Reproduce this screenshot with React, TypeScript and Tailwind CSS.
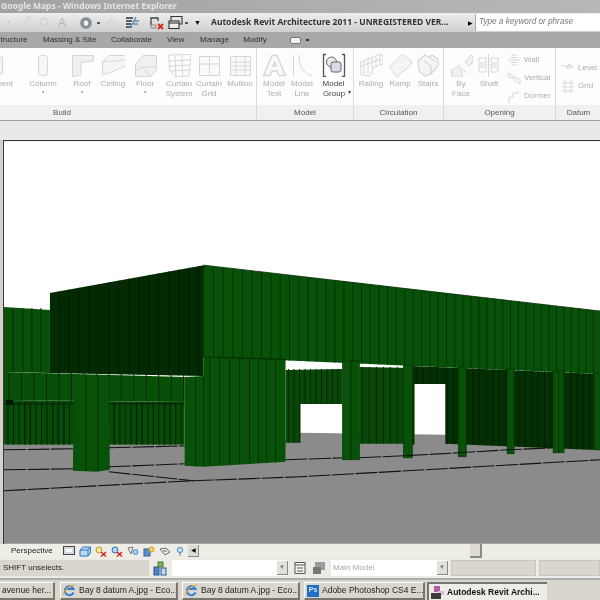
import type { ReactNode } from 'react';

const FONT = "font-['Liberation_Sans',sans-serif]";

// stripes on the long facade get tighter going away from the viewer
const longFaceLines = (() => {
  const xs: number[] = [];
  let x = 203;
  while (x < 600) {
    xs.push(x);
    x += 9.8 - ((x - 203) / 397) * 2.6;
  }
  return xs;
})();
const range = (from: number, to: number, step: number) => {
  const out: number[] = [];
  for (let x = from; x < to; x += step) out.push(x);
  return out;
};
const faceTop = (x: number) => 265 + ((x - 203) * 46) / 397;
const faceBottom = (x: number) => 357 + ((x - 203) * 17) / 397;

const pillars = [
  [342, 359, 361, 460],
  [403, 412, 365, 458],
  [458, 466, 367, 457],
  [507, 514, 369, 454],
  [553, 564, 371, 453],
  [594, 602, 373, 450],
];

const Building = () => (
  <svg viewBox="3 141 597 403" className="block h-full w-full">
    <rect x="3" y="141" width="597" height="403" fill="#ffffff" />
    <polygon points="3,445 184,445 285,440 300,433 445,435 600,450 600,544 3,544" fill="#8b8b8b" />

    {/* far wall behind the columns */}
    <polygon points="285,370 342,369 342,404 300,404 300,443 285,443" fill="#084708" />
    <polygon points="359,367 414,368 414,444 359,444" fill="#084708" />
    {range(288, 342, 5.5).map((x) => (
      <line key={x} x1={x} y1="369" x2={x} y2={x < 300 ? 443 : 404} stroke="#022802" strokeWidth="1" />
    ))}
    {range(362, 414, 7).map((x) => (
      <line key={x} x1={x} y1="367" x2={x} y2="444" stroke="#022802" strokeWidth="1" />
    ))}
    <polygon points="412,366 600,374 600,450 590,450 445,444 445,384 414,384 414,445 412,445" fill="#032f03" />
    {range(447, 600, 6.5).map((x) => (
      <line key={x} x1={x} y1="368" x2={x} y2={444 + ((x - 445) * 6) / 145} stroke="#012001" strokeWidth="1" />
    ))}
    {range(416, 445, 7).map((x) => (
      <line key={x} x1={x} y1="367" x2={x} y2="384" stroke="#012001" strokeWidth="1" />
    ))}

    {/* left wing */}
    <polygon points="3,307 49,310 49,373 3,372" fill="#085008" />
    {[12, 22, 31, 40].map((x) => (
      <line key={x} x1={x} y1="308" x2={x} y2="372" stroke="#022c02" strokeWidth="1" />
    ))}
    <polygon points="3,372 184,377 184,402 3,400" fill="#085008" />
    {range(8, 184, 12.5).map((x) => (
      <line key={x} x1={x} y1="373" x2={x} y2="401" stroke="#022c02" strokeWidth="1" />
    ))}
    <polygon points="3,400 184,402 184,445 3,445" fill="#084a08" />
    {range(7, 184, 5.6).map((x) => (
      <line key={x} x1={x} y1="402" x2={x} y2="445" stroke="#022402" strokeWidth={x % 2 > 1 ? 1.4 : 1} />
    ))}
    <line x1="3" y1="404" x2="184" y2="404" stroke="#022402" strokeWidth="1" />
    <rect x="5" y="400" width="7" height="5" fill="#011501" />

    {/* dark end face */}
    <polygon points="49,293 203,265 203,376 49,373" fill="#032a03" />
    {range(58, 203, 10).map((x) => (
      <line key={x} x1={x} y1={293 - ((x - 49) * 28) / 154} x2={x} y2={373 + ((x - 49) * 3) / 154} stroke="#012001" strokeWidth="1" />
    ))}

    {/* long facade */}
    <polygon points="203,265 600,311 600,374 300,361 203,357" fill="#085108" />
    {longFaceLines.map((x) => (
      <line key={x} x1={x} y1={faceTop(x)} x2={x} y2={faceBottom(x)} stroke="#033003" strokeWidth="1" />
    ))}
    <line x1="203" y1="265" x2="600" y2="311" stroke="#0b2f0b" strokeWidth="0.8" />

    {/* corner block */}
    <polygon points="184,377 203,376 203,357 285,359 285,462 202,467 184,466" fill="#085108" />
    <line x1="203" y1="357" x2="285" y2="359.5" stroke="#022802" strokeWidth="1" />
    {[195, 203, 209, 219, 229, 239, 249, 258, 266, 275].map((x) => (
      <line key={x} x1={x} y1={x < 204 ? 377 : 358} x2={x} y2={467 - ((x - 184) * 5) / 100} stroke="#033003" strokeWidth="1" />
    ))}

    {/* near column */}
    <polygon points="73,375 108,375 109,470 96,472 72,471" fill="#085108" />
    <line x1="85" y1="375" x2="85" y2="471" stroke="#033003" strokeWidth="1" />
    <line x1="97" y1="375" x2="97" y2="471" stroke="#033003" strokeWidth="1" />

    {pillars.map(([l, r, t, b]) => (
      <g key={l}>
        <rect x={l} y={t} width={r - l} height={b - t} fill="#085108" stroke="#053005" strokeWidth="0.6" />
        {r - l > 10 && <line x1={(l + r) / 2} y1={t} x2={(l + r) / 2} y2={b} stroke="#033003" strokeWidth="1" />}
      </g>
    ))}

    {/* pavement edges */}
    <g stroke="#111111" strokeWidth="1.1" strokeDasharray="22 1.5" fill="none">
      <polyline points="3,491 192,481 300,477 600,460" />
      <polyline points="3,470 72,469" />
      <polyline points="108,472 193,481" />
      <polyline points="108,467 184,464" />
      <polyline points="285,460 342,458" />
      <polyline points="359,458 403,456 458,453 507,450 553,448" />
      <polyline points="3,450 72,449" />
      <polyline points="108,448 184,446" />
    </g>
  </svg>
);

const Ico = ({ children, w = 24, h = 24 }: { children: ReactNode; w?: number; h?: number }) => (
  <svg width={w} height={h} viewBox={`0 0 ${w} ${h}`} fill="none" stroke="#d6d6d6" strokeWidth="1" className="shrink-0">
    {children}
  </svg>
);

const ribbonIcons: Record<string, ReactNode> = {
  column: <rect x="7.5" y="2.5" width="9" height="20" rx="3" fill="#f6f6f6" />,
  roof: <path d="M2.5 2.5H23.5V8L11 9.5V22L2.5 23.5Z" fill="#f0f0f0" />,
  ceiling: <path d="M1.5 9L8 2.5H24.5V13L8 20L1.5 21.5ZM1.5 9L24.5 7" fill="#f5f5f5" />,
  floor: <path d="M2.5 11L10 2.5H23.5V17L18 23.5H2.5ZM2.5 18L9 14H23.5M18 23.5L9 14" fill="#f0f0f0" />,
  curtainSystem: <path d="M1.5 2L24 1.5L22 23L9 24L3 18ZM8 3L9 24M15 2L15.5 23.5M2.5 8L23 7M3 13L23 12M4 18L22.5 17" />,
  curtainGrid: <path d="M2.5 3.5H22.5V22.5H2.5ZM2.5 11H22.5M12.5 3.5V22.5" fill="#fafafa" />,
  mullion: <path d="M2.5 3.5H22.5V22.5H2.5ZM2.5 9H22.5M2.5 13H22.5M2.5 17H22.5M8 3.5V22.5M17 3.5V22.5" fill="#fafafa" />,
  modelText: <path d="M1.5 22.5L10 2.5H15L23.5 22.5H17L15 18H10L8 22.5ZM11 13L12.5 9L14 13Z" fill="#f8f8f8" strokeWidth="1.3" />,
  modelLine: (
    <>
      <path d="M3.5 2V23" />
      <path d="M9 2C9 13 13 20 22 23" />
    </>
  ),
  railing: (
    <path d="M1.5 9L20 1.5L24 2V11L15 14L11 23L2 22ZM5 8V21M9 6.5V21M13 5V15M17 3.5V14M21 2V12M2 13L22 6" />
  ),
  ramp: <path d="M1.5 14L14 1.5L23.5 8V11L9 24Z" fill="#f5f5f5" />,
  stairs: (
    <path d="M2 8L9 2L13 4L16 2L22 6V13L15 21L9 23L3 18ZM8 8L15 13V21M13 4L20 9" fill="#f5f5f5" strokeWidth="1.2" />
  ),
  byFace: <path d="M2 17L8 14L13 18V24H3ZM9 12L18 20M16 9L22 2L24 4V9L20 13Z" fill="#f0f0f0" />,
  shaft: <path d="M2 5H9V10H2ZM14 5H21V10H14ZM2 14H9V19H2ZM14 14H21V19H14ZM11.5 1V24M1 12H23" />,
};

const Item = ({ w, icon, lines, arrow, active }: { w: number; icon?: string; lines: string[]; arrow?: boolean; active?: boolean }) => (
  <div style={{ width: w }} className="flex shrink-0 flex-col items-center pt-[5px]">
    <div className="flex h-[24px] w-[24px] items-center justify-center">
      {icon && <Ico>{ribbonIcons[icon]}</Ico>}
      {active && (
        <Ico>
          <path d="M4 1.5H1.5V23.5H4M20 1.5H22.5V23.5H20" stroke="#555" strokeWidth="1.3" />
          <circle cx="9.5" cy="9" r="5" stroke="#666" fill="#e9edf2" />
          <rect x="9" y="9" width="10" height="10" rx="2" stroke="#666" fill="#d7dde5" />
        </Ico>
      )}
    </div>
    <div className={`mt-[2px] text-center text-[8px] leading-[10px] whitespace-nowrap ${active ? 'text-[#444]' : 'text-[#adadad]'}`}>
      {lines.map((l, i) => (
        <div key={l} className={active && i === 1 ? 'ml-[7px]' : ''}>
          {l}
          {active && i === 1 && <span className="ml-[3px] text-[6px] leading-[6px] align-top">▾</span>}
        </div>
      ))}
      {arrow && <div className="text-[6px] leading-[6px] text-[#888]">▪</div>}
    </div>
  </div>
);

const SmallRow = ({ icon, label, className = '' }: { icon: ReactNode; label: string; className?: string }) => (
  <div className={`flex h-[18px] items-center gap-[3px] text-[8px] whitespace-nowrap text-[#adadad] ${className}`}>
    <Ico w={14} h={14}>
      {icon}
    </Ico>
    <span>{label}</span>
  </div>
);

const Panel = ({ w, label, labelClass = 'w-full', children }: { w: number; label: string; labelClass?: string; children: ReactNode }) => (
  <div style={{ width: w }} className="flex shrink-0 flex-col border-r border-[#d9d9d9]">
    <div className="flex h-[57px] overflow-hidden">{children}</div>
    <div className="h-[15px] bg-[#f0f0f0] text-[8px] leading-[15px] text-[#555]">
      <div className={`text-center ${labelClass}`}>{label}</div>
    </div>
  </div>
);

const Ribbon = () => (
  <div className="flex h-[72px] overflow-hidden bg-[#fdfdfd]">
    <Panel w={257} label="Build" labelClass="w-[124px]">
      <div className="flex w-[23px] shrink-0 flex-col pt-[5px]">
        <Ico w={4} h={24}>
          <path d="M-4 4H2.5V21H-4" fill="#f4f4f4" />
        </Ico>
        <div className="mt-[2px] flex w-[13px] justify-end text-[8px] leading-[10px] whitespace-nowrap text-[#adadad]">ment</div>
      </div>
      <Item w={40} icon="column" lines={['Column']} arrow />
      <Item w={38} icon="roof" lines={['Roof']} arrow />
      <Item w={24} icon="ceiling" lines={['Ceiling']} />
      <Item w={40} icon="floor" lines={['Floor']} arrow />
      <Item w={28} icon="curtainSystem" lines={['Curtain', 'System']} />
      <Item w={32} icon="curtainGrid" lines={['Curtain', 'Grid']} />
      <Item w={30} icon="mullion" lines={['Mullion']} />
    </Panel>
    <Panel w={97} label="Model">
      <Item w={34} icon="modelText" lines={['Model', 'Text']} />
      <Item w={22} icon="modelLine" lines={['Model', 'Line']} />
      <Item w={41} active lines={['Model', 'Group']} />
    </Panel>
    <Panel w={90} label="Circulation">
      <Item w={34} icon="railing" lines={['Railing']} />
      <Item w={24} icon="ramp" lines={['Ramp']} />
      <Item w={32} icon="stairs" lines={['Stairs']} />
    </Panel>
    <Panel w={112} label="Opening">
      <Item w={34} icon="byFace" lines={['By', 'Face']} />
      <Item w={22} icon="shaft" lines={['Shaft']} />
      <div className="flex flex-col pt-[3px] pl-[7px]">
        <SmallRow label="Wall" icon={<path d="M1 7H13M4 2H10M4 4.5H10M4 9.5H10M4 12H10" />} />
        <SmallRow label="Vertical" icon={<path d="M1 2L6 5V8L1 5ZM8 6L13 9V13L8 10Z" />} />
        <SmallRow label="Dormer" icon={<path d="M2 14V8H6V4H11V2" />} />
      </div>
    </Panel>
    <Panel w={46} label="Datum">
      <div className="flex flex-col pt-[11px] pl-[5px]">
        <SmallRow label="Level" icon={<path d="M0 5H13M5 7L8 3L11 7Z" />} />
        <SmallRow label="Grid" icon={<path d="M1 4H13M1 8H13M1 12H13M4 1V14M10 1V14" />} />
      </div>
    </Panel>
  </div>
);

const QuickBar = () => (
  <div className="flex h-[19px] items-center bg-gradient-to-b from-[#eeeeee] to-[#cfcfcf]">
    <div className="flex w-[66px] shrink-0 items-center justify-end gap-[8px] text-[#b9b9b9]">
      <span className="text-[7px] text-[#c4c4c4]">▪</span>
      <svg width="13" height="13" viewBox="0 0 13 13" fill="none" stroke="#cfcfcf">
        <path d="M1 12L12 1M9 1H12V4" />
      </svg>
      <svg width="11" height="11" viewBox="0 0 11 11" fill="none" stroke="#cfcfcf">
        <circle cx="5" cy="5" r="4" />
        <path d="M7 7L10 10" />
      </svg>
      <span className="text-[12px] leading-none text-[#b4b4b4]">A</span>
    </div>
    <svg width="14" height="14" viewBox="0 0 14 14" className="ml-[13px] shrink-0">
      <circle cx="7" cy="7" r="6" fill="#8f9aa3" />
      <path d="M4 5L7 3.5L10 5V9L7 11L4 9Z" fill="#e9edf0" stroke="#46505a" strokeWidth="0.8" />
    </svg>
    <span className="ml-[4px] h-[2px] w-[3px] shrink-0 bg-[#555]" />
    <svg width="10" height="10" viewBox="0 0 10 10" fill="none" stroke="#c9c9c9" className="ml-[6px] shrink-0">
      <path d="M5 1L9 5L5 9L1 5Z" />
    </svg>
    <svg width="14" height="13" viewBox="0 0 14 13" className="ml-[9px] shrink-0">
      <path d="M1 2H8M1 5H7M1 8H6M1 11H7" stroke="#333" strokeWidth="1.3" />
      <path d="M5 12L11 1" stroke="#3b8fe0" strokeWidth="1.3" />
      <path d="M9 5H14M8 8H13" stroke="#555" />
    </svg>
    <svg width="15" height="15" viewBox="0 0 15 15" fill="none" className="ml-[10px] shrink-0">
      <path d="M2 10V3H9V6M2 3H9" stroke="#444" strokeWidth="1.3" />
      <path d="M2 10H7V13H2Z" stroke="#888" />
      <path d="M9 9L14 14M14 9L9 14" stroke="#d8261c" strokeWidth="1.8" />
    </svg>
    <svg width="15" height="15" viewBox="0 0 15 15" fill="none" stroke="#333" strokeWidth="1.1" className="ml-[4px] shrink-0">
      <path d="M3 6V1.5H14V9H11" />
      <rect x="1" y="6" width="10" height="7.5" fill="#eeeeee" />
      <path d="M1 8H11" />
    </svg>
    <span className="ml-[2px] h-[2px] w-[3px] shrink-0 bg-[#555]" />
    <span className="ml-[6px] w-[8px] shrink-0 text-[7px] leading-none text-black">▼</span>
    <div className="ml-[9px] w-[252px] shrink-0 font-['Noto_Sans',sans-serif] text-[8.5px] font-bold whitespace-nowrap text-[#333]">
      Autodesk Revit Architecture 2011 - UNREGISTERED VER...
    </div>
    <span className="ml-[5px] w-[5px] shrink-0 text-[6px] leading-none text-black">▶</span>
    <div className="ml-[2px] flex h-[17px] flex-1 items-center border-l border-[#aaaaaa] bg-white pl-[3px] text-[8.2px] whitespace-nowrap text-[#777] italic">
      Type a keyword or phrase
    </div>
  </div>
);

const Tabs = () => {
  const tabs = [
    ['tructure', 0, 28],
    ['Massing & Site', 15, 53],
    ['Collaborate', 15, 41],
    ['View', 15, 17],
    ['Manage', 16, 28],
    ['Modify', 15, 24],
  ] as const;
  return (
    <div className="flex h-[16px] items-center overflow-hidden bg-[#a8a8a8] text-[8px] whitespace-nowrap text-[#2e2e2e]">
      {tabs.map(([t, ml, w]) => (
        <span key={t} style={{ marginLeft: ml, width: w }} className="shrink-0 text-center">
          {t}
        </span>
      ))}
      <span className="ml-[23px] h-[7px] w-[11px] rounded-[2px] border border-[#777] bg-[#f2f2f2]" />
      <span className="ml-[5px] h-[2px] w-[3px] bg-[#333]" />
    </div>
  );
};

const ViewBar = () => (
  <div className="flex h-[14px] items-center bg-[#eeede6] pl-[11px] text-[8px] text-[#222]">
    <span className="w-[52px] shrink-0">Perspective</span>
    <div className="flex items-center gap-[4px]">
      <svg width="12" height="10" viewBox="0 0 12 10"><rect x="0.5" y="0.5" width="11" height="8" fill="#d5d9dd" stroke="#444" /><rect x="3" y="3" width="6" height="3" fill="#fff" /></svg>
      <svg width="12" height="11" viewBox="0 0 12 11" fill="#bcd8f3" stroke="#2b75c4"><path d="M1 4L4 1H11.5V7L9 10H1ZM1 4H9V10M9 4L11.5 1" /></svg>
      <svg width="12" height="11" viewBox="0 0 12 11" fill="none"><circle cx="4" cy="4" r="3" fill="#f7e3a2" stroke="#c99b22" /><path d="M6 6L11 10.5M11 6L6 10.5" stroke="#d8261c" strokeWidth="1.5" /></svg>
      <svg width="12" height="11" viewBox="0 0 12 11" fill="none"><circle cx="4" cy="4" r="3" fill="#b9d6ef" stroke="#2b6fb3" /><path d="M6 6L11 10.5M11 6L6 10.5" stroke="#d8261c" strokeWidth="1.5" /></svg>
      <svg width="12" height="11" viewBox="0 0 12 11" fill="none"><path d="M1 2L6 1L4 8Z" stroke="#777" /><circle cx="8.5" cy="6" r="2.5" fill="#a8d0f0" stroke="#4a8cc7" /></svg>
      <svg width="12" height="11" viewBox="0 0 12 11"><rect x="1" y="3" width="6" height="7" fill="#5b93d1" stroke="#2a5fa0" /><circle cx="8.5" cy="3.5" r="2.5" fill="#f3d46b" stroke="#c99b22" /></svg>
      <svg width="12" height="11" viewBox="0 0 12 11" fill="none" stroke="#666"><path d="M1 3L7 2L11 6L6 9ZM4 5L8 5" /></svg>
      <svg width="10" height="11" viewBox="0 0 10 11"><circle cx="5" cy="4" r="2.7" fill="#bfe0f7" stroke="#4a97d6" /><path d="M5 7V10" stroke="#777" /></svg>
    </div>
    <div className="ml-[3px] flex h-[12px] w-[11px] items-center justify-center border-r border-b border-[#888] bg-[#dcdad3] text-[6px] text-black">◀</div>
    <div className="ml-[271px] h-[14px] w-[12px] border-r-2 border-b-2 border-[#8c8a83] bg-[#dedcd4]" />
  </div>
);

const ComboField = ({ w, text }: { w: number; text?: string }) => (
  <div style={{ width: w }} className="flex h-[16px] shrink-0 items-center justify-between bg-white pl-[2px] text-[8px] text-[#a9a9a9]">
    <span>{text}</span>
    <div className="flex h-[14px] w-[11px] items-center justify-center border-r border-b border-[#888] bg-[#e2e0d9] text-[6px] text-[#777]">▼</div>
  </div>
);

const StatusBar = () => (
  <div className="flex h-[20px] items-center bg-[#ecebe5] text-[8px]">
    <div className="h-[16px] w-[149px] shrink-0 bg-[#d9d6cd] pl-[3px] leading-[16px] text-[#222]">SHIFT unselects.</div>
    <svg width="15" height="15" viewBox="0 0 15 15" className="ml-[4px] shrink-0">
      <rect x="1" y="6" width="5" height="8" fill="#4d86c5" stroke="#28588f" />
      <rect x="8" y="7" width="5" height="7" fill="#c7d9ea" stroke="#28588f" />
      <rect x="5" y="1" width="5" height="5" fill="#7ab55c" stroke="#487a2f" />
    </svg>
    <div className="ml-[4px]"><ComboField w={116} /></div>
    <svg width="12" height="14" viewBox="0 0 12 14" fill="none" stroke="#555" className="ml-[6px] shrink-0">
      <rect x="1" y="1.5" width="10" height="11" fill="#f4f4f4" />
      <path d="M1 4H11M3 7H9M3 10H9" />
    </svg>
    <svg width="14" height="14" viewBox="0 0 14 14" className="ml-[6px] shrink-0">
      <rect x="3" y="1" width="10" height="8" fill="#9b9b9b" />
      <rect x="1" y="6" width="8" height="7" fill="#777" />
    </svg>
    <div className="ml-[5px]"><ComboField w={117} text="Main Model" /></div>
    <div className="ml-[3px] h-[16px] w-[85px] shrink-0 border border-[#c7c5bc] bg-[#d9d6cd]" />
    <div className="ml-[3px] h-[16px] flex-1 border border-[#c7c5bc] bg-[#d9d6cd]" />
  </div>
);

const IeIcon = () => (
  <svg width="13" height="13" viewBox="0 0 13 13" fill="none" className="shrink-0">
    <path d="M10.5 8.5A4.5 4.5 0 1 1 10.5 5H3" stroke="#2f80d8" strokeWidth="2" />
    <path d="M1 11C0 8 5 1.5 12 1" stroke="#f2a020" strokeWidth="1.2" />
  </svg>
);

const TaskButton = ({ w, ml, icon, label, active }: { w: number; ml: number; icon?: ReactNode; label: string; active?: boolean }) => (
  <div
    style={{ width: w, marginLeft: ml }}
    className={`flex h-[18px] shrink-0 items-center gap-[3px] overflow-hidden pl-[2px] text-[8.5px] whitespace-nowrap ${
      active
        ? 'border-t-2 border-l-2 border-[#77756d] bg-[#eeece6] font-bold text-[#111]'
        : 'border-t border-r-2 border-b-2 border-l border-[#77756d] border-t-white border-l-white bg-[#d9d6cd] text-[#222]'
    }`}
  >
    {icon}
    <span>{label}</span>
  </div>
);

const TaskBar = () => (
  <div className="flex h-[22px] items-start border-t-2 border-[#a9adb2] bg-[#d9d6cd] pt-[2px]">
    <TaskButton w={56} ml={-1} label="avenue her..." />
    <TaskButton w={118} ml={5} icon={<IeIcon />} label="Bay 8 datum A.jpg - Eco..." />
    <TaskButton w={118} ml={4} icon={<IeIcon />} label="Bay 8 datum A.jpg - Eco..." />
    <TaskButton
      w={121}
      ml={4}
      icon={
        <span className="flex h-[12px] w-[12px] shrink-0 items-center justify-center bg-[#1f6fc4] text-[7px] font-bold text-[#cfe6ff]">Ps</span>
      }
      label="Adobe Photoshop CS4 E..."
    />
    <TaskButton
      w={120}
      ml={2}
      active
      icon={
        <svg width="13" height="13" viewBox="0 0 13 13" className="shrink-0">
          <rect x="3" y="0" width="6" height="6" fill="#b25fa8" />
          <rect x="7" y="5" width="6" height="4" fill="#e5b5de" />
          <rect x="0" y="7" width="10" height="6" fill="#3d3d3d" />
        </svg>
      }
      label="Autodesk Revit Archi..."
    />
  </div>
);

export default function App() {
  return (
    <div className={`flex h-[600px] w-[600px] flex-col overflow-hidden bg-[#d4d0c8] blur-[0.4px] ${FONT}`}>
      <div className="flex h-[13px] items-center bg-gradient-to-r from-[#a2a2a2] to-[#b8b8b8] font-['Noto_Sans',sans-serif] text-[8.5px] font-bold whitespace-nowrap text-[#e4e4e4]">
        <span className="ml-[1px]">Google Maps - Windows Internet Explorer</span>
      </div>
      <QuickBar />
      <Tabs />
      <Ribbon />
      <div className="h-[20px] border-t border-[#9f9f9f] bg-[#e9e9eb]" />
      <div className="ml-[3px] flex h-[404px] flex-col border-t border-l border-[#3a3a3a]">
        <Building />
      </div>
      <ViewBar />
      <StatusBar />
      <TaskBar />
    </div>
  );
}
